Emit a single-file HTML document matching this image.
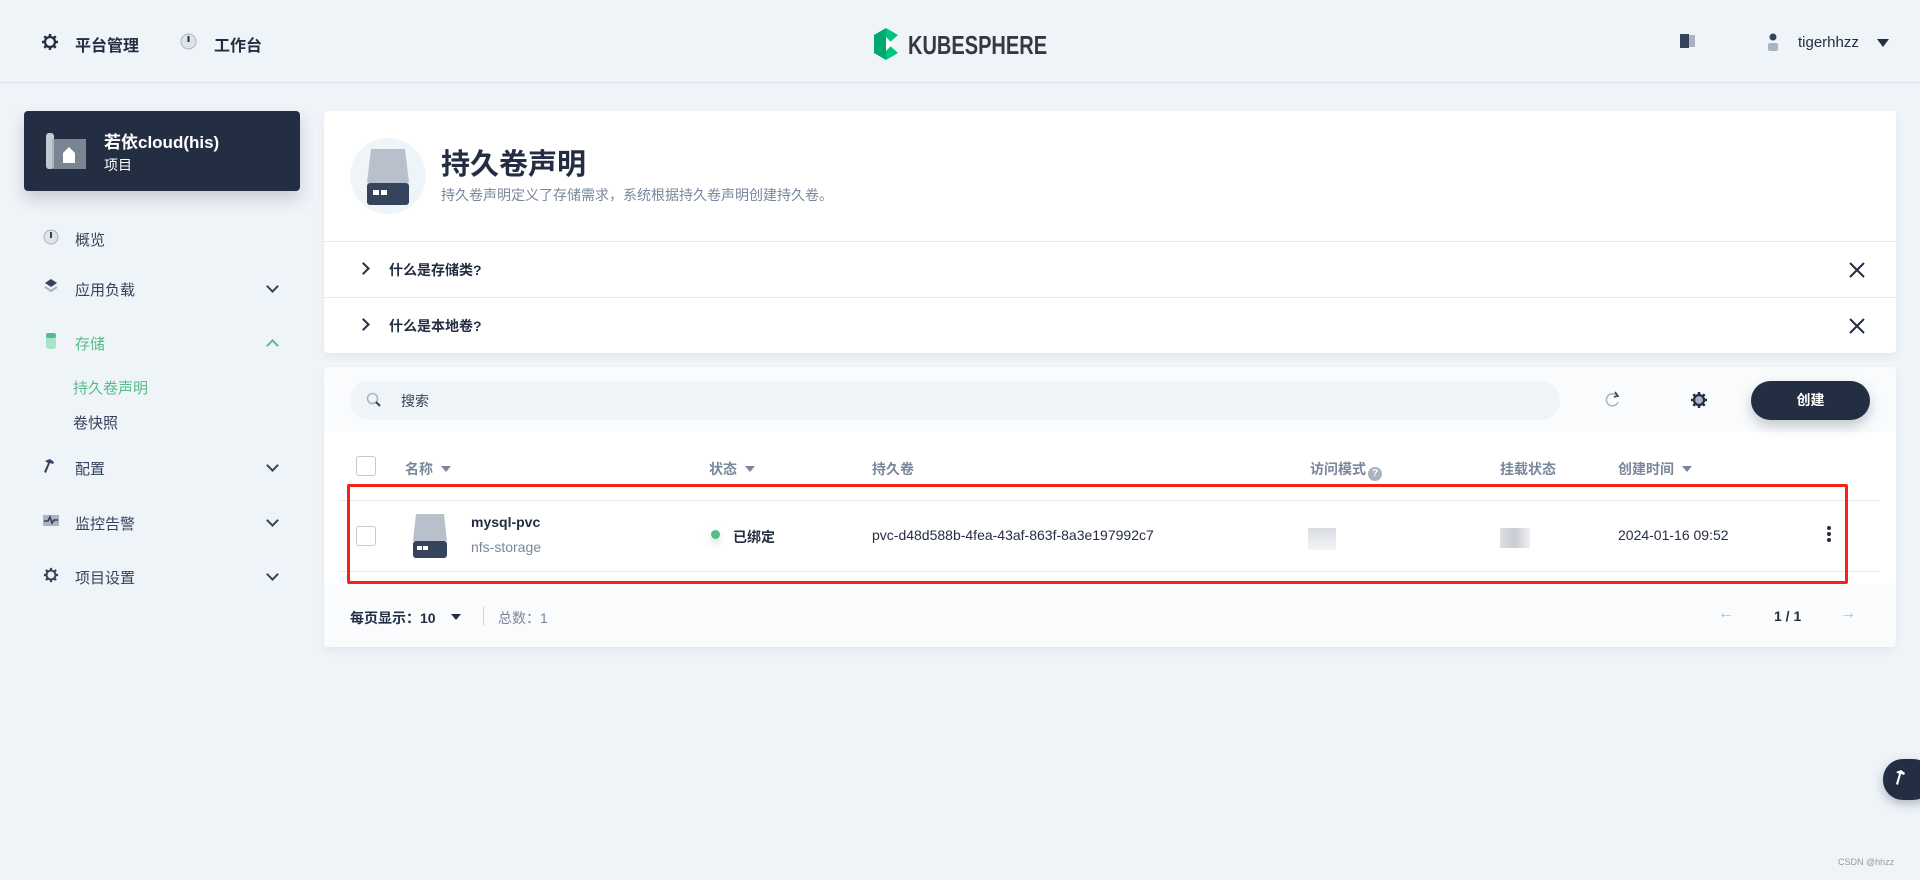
<!DOCTYPE html>
<html><head><meta charset="utf-8"><style>
*{box-sizing:border-box;margin:0;padding:0}
body{width:1920px;height:880px;background:#eff4f9;font-family:"Liberation Sans","Noto Sans CJK SC",sans-serif;color:#242e42;position:relative;overflow:hidden;font-size:15px}
.abs{position:absolute}
.hdr{left:0;top:0;width:1920px;height:83px;border-bottom:1px solid #dde3ea}
.nav{top:32px;font-size:16px;font-weight:bold;color:#242e42}
.side{left:24px;top:111px;width:276px;height:80px;background:#242e42;border-radius:4px;box-shadow:0 8px 16px rgba(36,46,66,.2)}
.mi{left:75px;font-size:15px;color:#36435c}
.ic{left:43px;width:16px;height:16px}
.chev{left:268px;width:9px;height:9px;border-right:2px solid #36435c;border-bottom:2px solid #36435c}
.card{left:324px;width:1572px;background:#fff;border-radius:4px;box-shadow:0 4px 8px rgba(36,46,66,.06)}
.th{top:459px;font-size:14px;font-weight:bold;color:#79879c}
.tri{display:inline-block;width:0;height:0;border-left:5px solid transparent;border-right:5px solid transparent;border-top:6px solid #79879c;margin-left:8px;vertical-align:2px}
</style></head><body>
<div class="abs hdr"></div>
<svg class="abs" style="left:41px;top:33px" width="18" height="18" viewBox="0 0 18 18"><circle cx="9" cy="9" r="5" fill="none" stroke="#242e42" stroke-width="2.2"/><g stroke="#242e42" stroke-width="2.5"><path d="M9 1v3M9 14v3M1 9h3M14 9h3M3.3 3.3l2 2M12.7 12.7l2 2M3.3 14.7l2-2M12.7 5.3l2-2"/></g></svg>
<div class="abs nav" style="left:75px">平台管理</div>
<svg class="abs" style="left:180px;top:33px" width="17" height="17" viewBox="0 0 17 17"><circle cx="8.5" cy="8.5" r="7.5" fill="#dfe4ea" stroke="#aab3c1"/><path d="M8.5 3v6" stroke="#242e42" stroke-width="2"/></svg>
<div class="abs nav" style="left:214px">工作台</div>
<svg class="abs" style="left:870px;top:27px" width="32" height="34" viewBox="0 0 32 34"><path d="M4 8L16 1v32L4 26z" fill="#00a971"/><path d="M16 1l12 7-10 9 10 9-12 7z" fill="#00c57e"/><path d="M16 10l7 7-7 7z" fill="#fff"/></svg>
<div class="abs" style="left:908px;top:30px;font-size:26px;font-weight:bold;color:#3a3745;letter-spacing:0;transform:scaleX(.77);transform-origin:left">KUBESPHERE</div>
<div class="abs" style="left:1680px;top:34px;width:9px;height:14px;background:#36435c"></div><div class="abs" style="left:1689px;top:35px;width:6px;height:12px;background:#aab3c1"></div>
<svg class="abs" style="left:1767px;top:33px" width="12" height="18" viewBox="0 0 12 18"><circle cx="6" cy="4" r="3.5" fill="#36435c"/><rect x="1" y="10" width="10" height="8" rx="2" fill="#aab3c1"/></svg>
<div class="abs" style="left:1798px;top:34px;font-size:15px;color:#242e42">tigerhhzz</div>
<div class="abs" style="left:1877px;top:39px;border-left:6px solid transparent;border-right:6px solid transparent;border-top:8px solid #242e42"></div>

<div class="abs side">
<svg class="abs" style="left:22px;top:20px" width="40" height="40" viewBox="0 0 40 40"><rect x="0" y="2" width="8" height="36" rx="3" fill="#c1c9d1"/><rect x="6" y="8" width="34" height="30" fill="#a0abb8" opacity=".7"/><path d="M17 32V22l6-6 6 6v10z" fill="#fff"/></svg>
<div class="abs" style="left:80px;top:17px;font-size:17px;font-weight:bold;color:#fff">若依cloud(his)</div>
<div class="abs" style="left:80px;top:44px;font-size:14px;color:#fff">项目</div>
</div>

<svg class="abs ic" style="top:229px" viewBox="0 0 16 16"><circle cx="8" cy="8" r="7" fill="#dfe4ea" stroke="#aab3c1"/><path d="M8 3v6" stroke="#36435c" stroke-width="2"/></svg>
<div class="abs mi" style="top:229px">概览</div>
<svg class="abs ic" style="top:278px" viewBox="0 0 16 16"><path d="M8 1l6 4-6 4-6-4z" fill="#36435c"/><path d="M2 9l6 4 6-4" stroke="#aab3c1" stroke-width="2" fill="none"/></svg>
<div class="abs mi" style="top:279px">应用负载</div><div class="abs chev" style="top:282px;transform:rotate(45deg)"></div>
<svg class="abs ic" style="top:333px" viewBox="0 0 16 16"><rect x="3" y="0" width="10" height="16" rx="3" fill="#a7e3c4"/><rect x="3" y="0" width="10" height="5" rx="2" fill="#55bc8a"/></svg>
<div class="abs mi" style="top:333px;color:#55bc8a">存储</div><div class="abs chev" style="top:341px;transform:rotate(-135deg);border-color:#55bc8a"></div>
<div class="abs mi" style="top:377px;left:73px;color:#55bc8a">持久卷声明</div>
<div class="abs mi" style="top:412px;left:73px">卷快照</div>
<svg class="abs ic" style="top:458px" viewBox="0 0 16 16"><path d="M2 3l5-2 4 3-1 2-3-1-4 10-2-1 4-9z" fill="#36435c"/></svg>
<div class="abs mi" style="top:458px">配置</div><div class="abs chev" style="top:461px;transform:rotate(45deg)"></div>
<svg class="abs ic" style="top:513px" viewBox="0 0 16 16"><rect x="0" y="2" width="16" height="11" fill="#aab3c1"/><path d="M1 8h4l2-4 2 6 2-3h4" stroke="#36435c" stroke-width="1.6" fill="none"/></svg>
<div class="abs mi" style="top:513px">监控告警</div><div class="abs chev" style="top:516px;transform:rotate(45deg)"></div>
<svg class="abs ic" style="top:567px" viewBox="0 0 18 18"><circle cx="9" cy="9" r="5" fill="none" stroke="#36435c" stroke-width="2.2"/><path d="M9 1v3M9 14v3M1 9h3M14 9h3M3.3 3.3l2 2M12.7 12.7l2 2M3.3 14.7l2-2M12.7 5.3l2-2" stroke="#36435c" stroke-width="2.5"/></svg>
<div class="abs mi" style="top:567px">项目设置</div><div class="abs chev" style="top:570px;transform:rotate(45deg)"></div>

<div class="abs card" style="top:111px;height:242px"></div>
<div class="abs" style="left:350px;top:138px;width:76px;height:76px;border-radius:50%;background:#eff4f9"></div>
<svg class="abs" style="left:367px;top:149px" width="42" height="56" viewBox="0 0 42 56"><path d="M4 0h34l4 34H0z" fill="#b7c0cb"/><rect x="0" y="34" width="42" height="22" rx="3" fill="#36435c"/><rect x="6" y="41" width="6" height="5" fill="#fff"/><rect x="14" y="41" width="6" height="5" fill="#fff"/></svg>
<div class="abs" style="left:441px;top:141px;font-size:29px;font-weight:bold;color:#242e42">持久卷声明</div>
<div class="abs" style="left:441px;top:185px;font-size:14px;color:#79879c">持久卷声明定义了存储需求，系统根据持久卷声明创建持久卷。</div>
<div class="abs" style="left:324px;top:241px;width:1572px;height:1px;background:#e3e9ef"></div>
<div class="abs" style="left:324px;top:297px;width:1572px;height:1px;background:#e3e9ef"></div>
<div class="abs" style="left:359px;top:264px;width:9px;height:9px;border-right:2px solid #242e42;border-top:2px solid #242e42;transform:rotate(45deg)"></div>
<div class="abs" style="left:389px;top:260px;font-size:14px;font-weight:bold">什么是存储类?</div>
<div class="abs" style="left:359px;top:320px;width:9px;height:9px;border-right:2px solid #242e42;border-top:2px solid #242e42;transform:rotate(45deg)"></div>
<div class="abs" style="left:389px;top:316px;font-size:14px;font-weight:bold">什么是本地卷?</div>
<svg class="abs" style="left:1849px;top:262px" width="16" height="16"><path d="M1 1l14 14M15 1L1 15" stroke="#242e42" stroke-width="2"/></svg>
<svg class="abs" style="left:1849px;top:318px" width="16" height="16"><path d="M1 1l14 14M15 1L1 15" stroke="#242e42" stroke-width="2"/></svg>

<div class="abs card" style="top:367px;height:280px;background:#f9fbfd"></div>
<div class="abs" style="left:324px;top:432px;width:1572px;height:152px;background:#fff"></div>
<div class="abs" style="left:350px;top:381px;width:1210px;height:39px;border-radius:20px;background:#eff4f9"></div>
<svg class="abs" style="left:366px;top:392px" width="16" height="16"><circle cx="6.5" cy="6.5" r="5" fill="none" stroke="#aab3c1" stroke-width="1.5"/><path d="M10 10l4 4" stroke="#36435c" stroke-width="2"/></svg>
<div class="abs" style="left:401px;top:391px;font-size:14px;color:#36435c">搜索</div>
<svg class="abs" style="left:1605px;top:391px" width="16" height="18"><path d="M12 5A6 6 0 1 0 13 11" fill="none" stroke="#aab3c1" stroke-width="1.6"/><path d="M10 1l3 4-4 1" fill="none" stroke="#36435c" stroke-width="1.6"/></svg>
<svg class="abs" style="left:1690px;top:391px" width="18" height="18" viewBox="0 0 18 18"><circle cx="9" cy="9" r="5" fill="#aab3c1" stroke="#242e42" stroke-width="2.2"/><path d="M9 1v3M9 14v3M1 9h3M14 9h3M3.3 3.3l2 2M12.7 12.7l2 2M3.3 14.7l2-2M12.7 5.3l2-2" stroke="#242e42" stroke-width="2.5"/></svg>
<div class="abs" style="left:1751px;top:381px;width:119px;height:39px;border-radius:20px;background:#242e42;box-shadow:0 6px 12px rgba(36,46,66,.25);color:#fff;font-size:14px;font-weight:bold;text-align:center;line-height:39px">创建</div>

<div class="abs" style="left:356px;top:456px;width:20px;height:20px;border:1px solid #c1c9d1;border-radius:3px;background:#fff"></div>
<div class="abs th" style="left:405px">名称<span class="tri"></span></div>
<div class="abs th" style="left:709px">状态<span class="tri"></span></div>
<div class="abs th" style="left:872px">持久卷</div>
<div class="abs th" style="left:1310px">访问模式<span style="display:inline-block;width:14px;height:14px;border-radius:50%;background:#aab3c1;color:#fff;font-size:10px;text-align:center;line-height:14px;margin-left:2px;vertical-align:-2px">?</span></div>
<div class="abs th" style="left:1500px">挂载状态</div>
<div class="abs th" style="left:1618px">创建时间<span class="tri"></span></div>
<div class="abs" style="left:340px;top:500px;width:1540px;height:1px;background:#e3e9ef"></div>
<div class="abs" style="left:340px;top:571px;width:1540px;height:1px;background:#e3e9ef"></div>
<div class="abs" style="left:356px;top:526px;width:20px;height:20px;border:1px solid #c1c9d1;border-radius:3px;background:#fff"></div>
<svg class="abs" style="left:413px;top:514px" width="34" height="44" viewBox="0 0 34 44"><path d="M3 0h28l3 27H0z" fill="#b7c0cb"/><rect x="0" y="27" width="34" height="17" rx="3" fill="#36435c"/><rect x="4" y="32" width="5" height="4" fill="#fff"/><rect x="10" y="32" width="5" height="4" fill="#fff"/></svg>
<div class="abs" style="left:471px;top:514px;font-size:14px;font-weight:bold">mysql-pvc</div>
<div class="abs" style="left:471px;top:539px;font-size:14px;color:#79879c">nfs-storage</div>
<div class="abs" style="left:711px;top:530px;width:9px;height:9px;border-radius:50%;background:#55bc8a;box-shadow:0 4px 8px rgba(85,188,138,.4)"></div>
<div class="abs" style="left:733px;top:527px;font-size:14px;font-weight:bold">已绑定</div>
<div class="abs" style="left:872px;top:527px;font-size:14px">pvc-d48d588b-4fea-43af-863f-8a3e197992c7</div>
<div class="abs" style="left:1308px;top:528px;width:28px;height:22px;background:linear-gradient(#d8dbe0,#f4f5f7)"></div>
<div class="abs" style="left:1500px;top:528px;width:30px;height:20px;background:linear-gradient(90deg,#dcdfe3,#c8ccd2,#f0f1f3)"></div>
<div class="abs" style="left:1618px;top:527px;font-size:14px">2024-01-16 09:52</div>
<div class="abs" style="left:1827px;top:526px;width:4px;height:4px;border-radius:50%;background:#242e42;box-shadow:0 6px 0 #242e42,0 12px 0 #242e42"></div>
<div class="abs" style="left:347px;top:484px;width:1501px;height:100px;border:3px solid #f5221a;border-radius:2px"></div>

<div class="abs" style="left:350px;top:608px;font-size:14px;font-weight:bold">每页显示：10</div>
<div class="abs" style="left:451px;top:614px;border-left:5px solid transparent;border-right:5px solid transparent;border-top:6px solid #242e42"></div>
<div class="abs" style="left:483px;top:606px;width:1px;height:20px;background:#d1d7de"></div>
<div class="abs" style="left:498px;top:608px;font-size:14px;color:#79879c">总数：<span style="color:#79879c">1</span></div>
<div class="abs" style="left:1718px;top:605px;font-size:16px;color:#aab3c1">←</div>
<div class="abs" style="left:1774px;top:608px;font-size:14px;font-weight:bold">1 / 1</div>
<div class="abs" style="left:1840px;top:605px;font-size:16px;color:#aab3c1">→</div>

<div class="abs" style="left:1883px;top:759px;width:50px;height:41px;border-radius:20px;background:#242e42;box-shadow:0 4px 10px rgba(36,46,66,.3)"></div>
<svg class="abs" style="left:1894px;top:769px" width="14" height="20"><path d="M2 3l5-2 4 3-1 2-3-1-3 11-2-1 3-10z" fill="#fff"/></svg>
<div class="abs" style="left:1838px;top:857px;font-size:9px;color:#999">CSDN @hhzz</div>
</body></html>
